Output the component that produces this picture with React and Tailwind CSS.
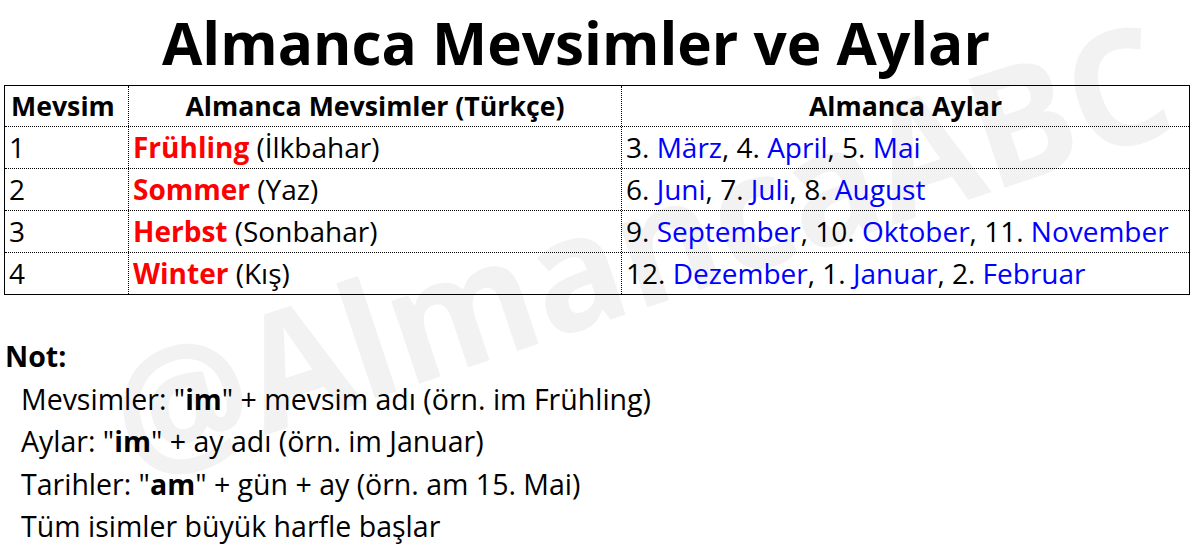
import React from "react";

const seasons = [
  { no: "1", de: "Frühling", tr: "İlkbahar", months: [["3.", "März"], ["4.", "April"], ["5.", "Mai"]] },
  { no: "2", de: "Sommer", tr: "Yaz", months: [["6.", "Juni"], ["7.", "Juli"], ["8.", "August"]] },
  { no: "3", de: "Herbst", tr: "Sonbahar", months: [["9.", "September"], ["10.", "Oktober"], ["11.", "November"]] },
  { no: "4", de: "Winter", tr: "Kış", months: [["12.", "Dezember"], ["1.", "Januar"], ["2.", "Februar"]] },
];

const notes = [
  { before: "Mevsimler: \"", bold: "im", after: "\" + mevsim adı (örn. im Frühling)" },
  { before: "Aylar: \"", bold: "im", after: "\" + ay adı (örn. im Januar)" },
  { before: "Tarihler: \"", bold: "am", after: "\" + gün + ay (örn. am 15. Mai)" },
  { before: "Tüm isimler büyük harfle başlar", bold: "", after: "" },
];

export default function App() {
  return (
    <div
      className="relative w-[1195px] h-[556px] overflow-hidden bg-white text-black"
      style={{ fontFamily: "'Open Sans', Lato, sans-serif" }}
    >
      {/* watermark */}
      <div className="pointer-events-none absolute left-[638px] top-[245px] -translate-x-1/2 -translate-y-1/2 rotate-[-18.5deg] scale-x-[0.95] whitespace-nowrap text-[160px] font-bold leading-none text-[#f2f2f2]">
        @AlmancaABC
      </div>

      <div className="relative">
        {/* title */}
        <div className="flex h-[85px] justify-center pr-[43px]">
          <h1 className="text-[58.5px] font-bold leading-[85px]">Almanca Mevsimler ve Aylar</h1>
        </div>

        {/* table */}
        <div className="ml-[4px] w-[1186px] border border-black text-[28px]">
          <div className="grid grid-cols-[123px_493px_1fr] border-b border-dotted border-black text-[26.7px] font-bold leading-[40px]">
            <div className="pl-[6px]">Mevsim</div>
            <div className="border-l border-dotted border-black text-center">Almanca Mevsimler (Türkçe)</div>
            <div className="border-l border-dotted border-black text-center">Almanca Aylar</div>
          </div>
          {seasons.map((s, i) => (
            <div
              key={s.no}
              className={
                "grid grid-cols-[123px_493px_1fr] leading-[41px] " +
                (i < seasons.length - 1 ? "border-b border-dotted border-black" : "")
              }
            >
              <div className="pl-[4px]">{s.no}</div>
              <div className="border-l border-dotted border-black pl-[4px] whitespace-pre">
                <span className="font-bold text-[#ff0000]">{s.de}</span> ({s.tr})
              </div>
              <div className="border-l border-dotted border-black pl-[4px] whitespace-pre">
                {s.months.map(([n, m], j) => (
                  <span key={m}>
                    {n} <span className="text-[#0000ff]">{m}</span>
                    {j < s.months.length - 1 ? ", " : ""}
                  </span>
                ))}
              </div>
            </div>
          ))}
        </div>

        {/* notes */}
        <div className="mt-[40px] pl-[5px] text-[28.5px] leading-[42.5px]">
          <div className="font-bold">Not:</div>
          {notes.map((n) => (
            <div key={n.before} className="pl-[16px] whitespace-pre">
              {n.before}
              {n.bold && <span className="font-bold">{n.bold}</span>}
              {n.after}
            </div>
          ))}
        </div>
      </div>
    </div>
  );
}
